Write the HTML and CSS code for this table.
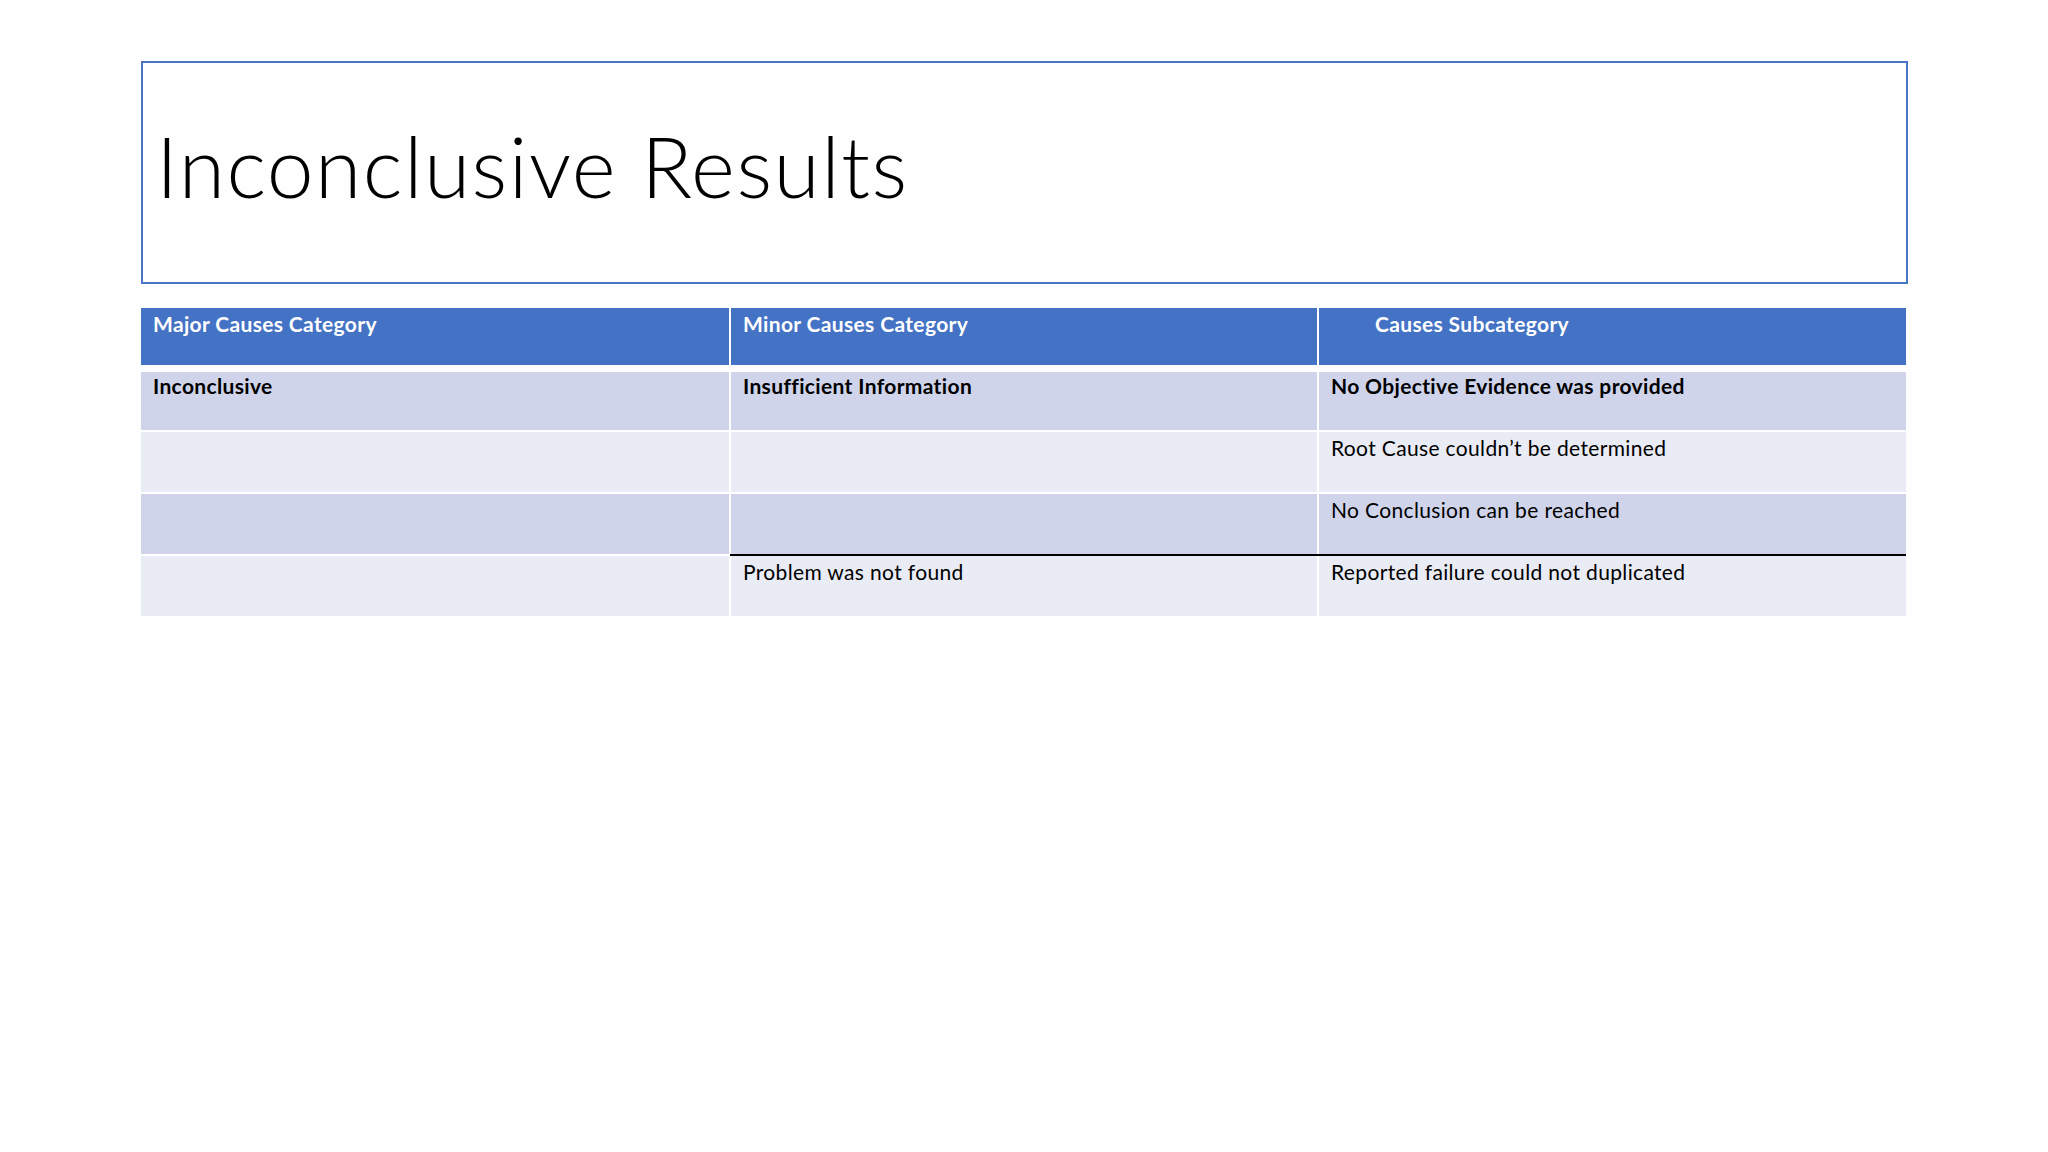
FILE: index.html
```html
<!DOCTYPE html>
<html lang="en">
<head>
<meta charset="utf-8">
<title>Inconclusive Results</title>
<link rel="stylesheet" href="styles.css">
</head>
<body>
<main class="slide">
  <header class="title-box">
    <h1 class="title">Inconclusive Results</h1>
  </header>
  <section class="table">
    <div class="row head">
      <div class="cell">Major Causes Category</div>
      <div class="cell">Minor Causes Category</div>
      <div class="cell indent">Causes Subcategory</div>
    </div>
    <div class="row odd first">
      <div class="cell bold">Inconclusive</div>
      <div class="cell bold">Insufficient Information</div>
      <div class="cell bold">No Objective Evidence was provided</div>
    </div>
    <div class="row even">
      <div class="cell"></div>
      <div class="cell"></div>
      <div class="cell">Root Cause couldn’t be determined</div>
    </div>
    <div class="row odd">
      <div class="cell"></div>
      <div class="cell"></div>
      <div class="cell">No Conclusion can be reached</div>
    </div>
    <div class="row even ruled">
      <div class="cell"></div>
      <div class="cell">Problem was not found</div>
      <div class="cell">Reported failure could not duplicated</div>
    </div>
  </section>
</main>
</body>
</html>
```
FILE: styles.css
```css
html, body {
  margin: 0;
  padding: 0;
  background: #fefefe;
}
body {
  width: 2048px;
  height: 1152px;
  overflow: hidden;
  font-family: Lato, "Open Sans", sans-serif;
  color: #000;
}
.slide {
  padding: 61px 0 0 141px;
}
.title-box {
  box-sizing: border-box;
  width: 1767px;
  height: 223px;
  border: 2px solid #4a74c6;
  display: flex;
  align-items: center;
  padding-left: 13px;
}
.title {
  margin: 0;
  font-weight: 300;
  font-size: 84px;
  line-height: 1;
  letter-spacing: 1.5px;
  position: relative;
  top: -7px;
}
.table {
  margin-top: 24px;
  width: 1765px;
  display: flex;
  flex-direction: column;
}
.row {
  display: grid;
  grid-template-columns: 588px 586px 587px;
  column-gap: 2px;
  background: #ffffff;
}
.cell {
  box-sizing: border-box;
  padding: 3px 12px 0 12px;
  font-size: 21px;
  line-height: 1.2;
  letter-spacing: 0.35px;
  height: 60px;
}
.head .cell {
  background: #4472c4;
  color: #fff;
  font-weight: 700;
  height: 57px;
}
.head .cell.indent {
  padding-left: 56px;
}
.head {
  padding-bottom: 7px;
}
.row.first .cell {
  height: 58px;
  padding-top: 1px;
}
.row + .row:not(.first) {
  padding-top: 2px;
}
.odd .cell {
  background: #cfd4ea;
}
.even .cell {
  background: #e9ebf5;
}
.bold {
  font-weight: 700;
}
.ruled {
  background:
    linear-gradient(to right, #ffffff 0, #ffffff 589px, #000 589px, #000 100%) top left / 100% 2px no-repeat,
    #ffffff;
}
```
